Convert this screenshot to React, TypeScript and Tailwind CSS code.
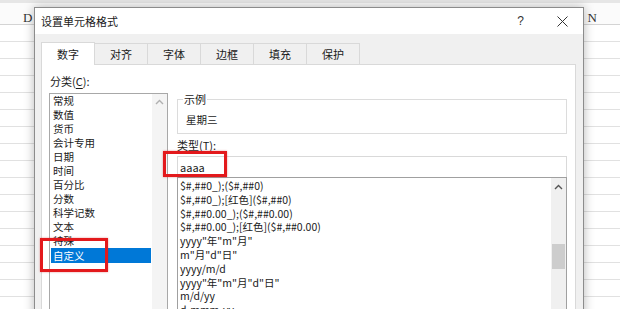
import React from "react";

const font = { fontFamily: '"Noto Sans CJK SC", "Noto Sans", sans-serif' };

const categories = ["常规", "数值", "货币", "会计专用", "日期", "时间", "百分比", "分数", "科学记数", "文本", "特殊", "自定义"];

const formats = [
  "$#,##0_);($#,##0)",
  "$#,##0_);[红色]($#,##0)",
  "$#,##0.00_);($#,##0.00)",
  "$#,##0.00_);[红色]($#,##0.00)",
  'yyyy"年"m"月"',
  'm"月"d"日"',
  "yyyy/m/d",
  'yyyy"年"m"月"d"日"',
  "m/d/yy",
  "d-mmm-yy",
];

const tabs = ["数字", "对齐", "字体", "边框", "填充", "保护"];

function Chevron({ color }: { color: string }) {
  return (
    <svg width="9" height="6" viewBox="0 0 9 6">
      <path d="M1 5 L4.5 1.5 L8 5" fill="none" stroke={color} strokeWidth="1.4" />
    </svg>
  );
}

export default function App() {
  return (
    <div className="relative w-[620px] h-[309px] overflow-hidden bg-white" style={font}>
      {/* spreadsheet behind */}
      <div className="flex flex-col">
        <div className="h-[3px] bg-[#e6e6e6]" />
        <div className="h-[22px] bg-[#fbfbfb] border-b border-[#d4d4d4] flex items-center pt-[8px] relative" style={{ fontFamily: '"Liberation Serif", serif' }}>
          <span className="ml-[23px] text-[13px] text-[#333]">D</span>
          <span className="ml-auto mr-[23px] text-[13px] text-[#333]">N</span>
        </div>
        {Array.from({ length: 17 }).map((_, i) => (
          <div key={i} className="h-[17px] border-b border-[#e1e1e1]" />
        ))}
      </div>

      {/* dialog */}
      <div className="absolute left-[34px] top-[7px] w-[550px] h-[320px] border border-[#8c8c8c] bg-[#f0f0f0] shadow-[0_0_10px_rgba(0,0,0,0.28)] flex flex-col text-[10.5px] text-[#1a1a1a]">
        <div className="h-[26px] bg-white flex items-center pl-[6px] shrink-0">
          <span className="text-[11px]">设置单元格格式</span>
          <span className="ml-auto mr-[33px] text-[12px] text-[#333]" style={{ fontFamily: '"Liberation Sans", sans-serif' }}>?</span>
          <svg className="mr-[15px]" width="11" height="11" viewBox="0 0 11 11">
            <path d="M0.5 0.5 L10.5 10.5 M10.5 0.5 L0.5 10.5" stroke="#333" strokeWidth="1" />
          </svg>
        </div>
        <div className="pl-[6px] pr-[7px] pt-[8px] flex flex-col">
          <div className="flex items-end h-[22px]">
            {tabs.map((t, i) =>
              i === 0 ? (
                <div key={t} className="w-[54px] h-[23px] -mb-px relative z-10 bg-white border border-b-0 border-[#d9d9d9] flex items-center justify-center text-[11px]">
                  {t}
                </div>
              ) : (
                <div key={t} className="w-[53px] h-[21px] border-t border-r border-[#d9d9d9] flex items-center justify-center text-[11px]">
                  {t}
                </div>
              )
            )}
          </div>
          <div className="h-[260px] bg-white border border-[#d9d9d9] flex pl-[7px] pt-[9px]">
            <div className="w-[119px] flex flex-col">
              <div className="h-[14px] leading-[14px] mb-[5px] ml-[1px] text-[11px]">
                分类(<span className="underline underline-offset-2">C</span>):
              </div>
              <div className="flex-1 border border-[#a8a8a8] flex">
                <div className="w-[102px] px-[1px] flex flex-col">
                  {categories.map((c) => (
                    <div
                      key={c}
                      className={
                        "h-[14px] leading-[14px] pl-[2px] " +
                        (c === "自定义" ? "bg-[#0078d7] text-white h-[15px] leading-[15px]" : "")
                      }
                    >
                      {c}
                    </div>
                  ))}
                </div>
                <div className="w-[15px] bg-[#f4f4f4] flex justify-center pt-[5px]">
                  <div className="h-[6px]">
                    <Chevron color="#b0b0b0" />
                  </div>
                </div>
              </div>
            </div>

            <div className="w-[390px] ml-[9px] pt-[18px] flex flex-col">
              <fieldset className="border border-[#dcdcdc] px-[5px] pb-[6px]">
                <legend className="px-[1px] leading-[14px] text-[11px]">示例</legend>
                <div className="ml-[3px] mt-[7px] leading-[14px]">星期三</div>
              </fieldset>
              <div className="mt-[4px] h-[14px] leading-[14px] text-[11px]">
                类型(<span className="underline underline-offset-2">T</span>):
              </div>
              <div className="mt-[4px] h-[21px] border-x border-t border-[#d9d9d9] flex items-center pl-[2px] text-[11px]">
                aaaa
              </div>
              <div className="h-[140px] border border-[#a0a0a0] flex">
                <div className="flex-1 pl-[2px] pt-[1px] flex flex-col">
                  {formats.map((f) => (
                    <div key={f} className="h-[13.8px] leading-[13.8px] whitespace-nowrap">
                      {f}
                    </div>
                  ))}
                </div>
                <div className="w-[15px] bg-[#f0f0f0] flex flex-col items-center">
                  <div className="h-[17px] flex items-center">
                    <Chevron color="#555" />
                  </div>
                  <div className="mt-[49px] w-[13px] h-[25px] bg-[#cdcdcd]" />
                </div>
              </div>
            </div>
          </div>
        </div>
      </div>

      {/* red highlight boxes */}
      <div className="absolute left-[40px] top-[238px] w-[68px] h-[34px] border-[3px] border-[#e3191c] shadow-[0_0_2px_rgba(200,0,0,0.4)]" />
      <div className="absolute left-[163px] top-[151px] w-[64px] h-[26px] border-[3px] border-[#e3191c] shadow-[0_0_2px_rgba(200,0,0,0.4)]" />
    </div>
  );
}
